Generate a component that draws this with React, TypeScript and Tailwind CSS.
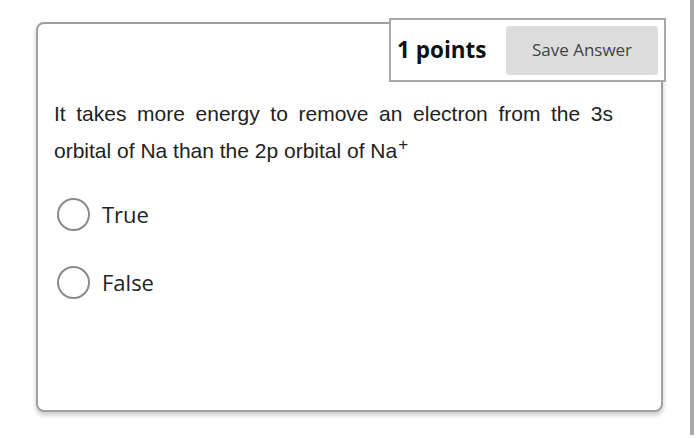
import { useState } from 'react';

const options = ['True', 'False'];

function Radio({ label, checked, onSelect }: { label: string; checked: boolean; onSelect: () => void }) {
  return (
    <label className="flex items-center gap-[12px] cursor-pointer" onClick={onSelect}>
      <span className="w-[33px] h-[33px] rounded-full border-2 border-[#8a8a8a] flex items-center justify-center">
        {checked && <span className="w-[17px] h-[17px] rounded-full bg-[#555]" />}
      </span>
      <span className="text-[22px] leading-[33px] text-[#222] font-['Open_Sans',sans-serif]">{label}</span>
    </label>
  );
}

export default function App() {
  const [answer, setAnswer] = useState<string | null>(null);

  return (
    <div className="w-[700px] h-[438px] bg-white flex">
      <div className="flex-1">
        <div className="relative ml-[36px] mt-[22px] w-[627px] h-[390px] border-2 border-[#a0a0a0] rounded-[8px] bg-white shadow-[0_3px_5px_rgba(0,0,0,0.22)]">
          <div className="absolute -top-[6px] -right-[5px] w-[277px] h-[64px] border-2 border-[#a8a8a8] bg-white flex items-center pl-[6px] pr-[6px] justify-between">
            <span className="text-[22.5px] font-bold text-[#111] font-['Open_Sans',sans-serif]">1 points</span>
            <button
              type="button"
              className="w-[152px] h-[49px] bg-[#dddddd] rounded-[3px] text-[17px] text-[#444] font-['Open_Sans',sans-serif]"
            >
              Save Answer
            </button>
          </div>

          <div className="pt-[71px] pl-[16px]">
            <p className="w-[559px] text-justify text-[21px] leading-[37px] text-[#222] font-['Liberation_Sans',Arial,sans-serif]">
              It takes more energy to remove an electron from the 3s orbital of Na than the 2p orbital of Na
              <sup className="text-[17px] ml-[1px] leading-none">+</sup>
            </p>

            <div className="mt-[29px] ml-[3px] flex flex-col gap-[35px]">
              {options.map((o) => (
                <Radio key={o} label={o} checked={answer === o} onSelect={() => setAnswer(o)} />
              ))}
            </div>
          </div>
        </div>
      </div>
      <div className="w-[4px] h-[435px] bg-[#a9a9a9] mr-[6px]" />
    </div>
  );
}
